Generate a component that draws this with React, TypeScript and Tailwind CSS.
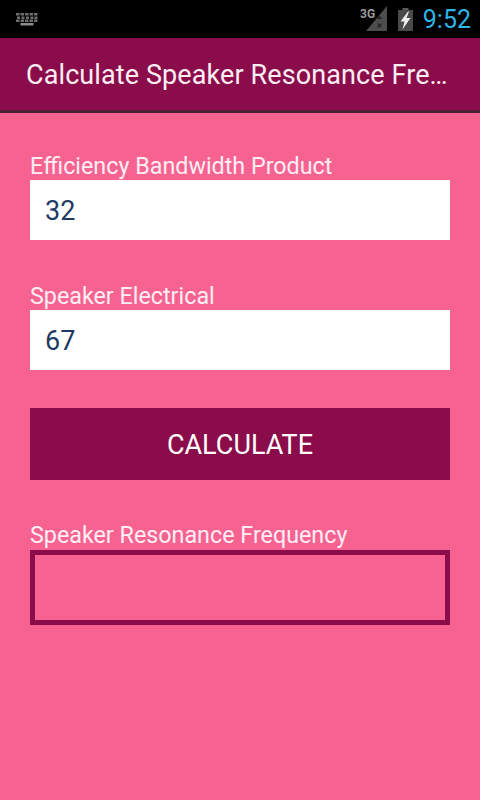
import React from 'react';

const KeyboardIcon = () => (
  <svg width="22" height="13" viewBox="0 0 22 13" fill="#6e6e6e">
    {[0, 4.5, 9, 13.5, 18].map(x => <rect key={x} x={x} y="0" width="3.5" height="2.5" />)}
    {[1, 5.5, 10, 14.5, 18.5].map(x => <rect key={x} x={x} y="3.5" width="3" height="2.5" />)}
    {[0, 4.5, 9, 13.5, 18].map(x => <rect key={x} x={x} y="6.5" width="3.5" height="2.5" />)}
    <rect x="4.5" y="10" width="13" height="2.5" fill="#8a8a8a" />
  </svg>
);

const SignalIcon = () => (
  <svg width="28" height="26" viewBox="0 0 28 26">
    <path d="M27 0V25H6Z" fill="#4d4d4d" />
    <path d="M19 9l3.5 4h-7z" fill="#262626" />
    <path d="M18 17l2 1.2 2.2-.6-1.4 2 .8 2.4-2.2-1.2-2 1.2.6-2.4z" fill="#262626" />
    <text x="0" y="12" fontSize="12" fontWeight="700" fill="#9a9a9a" fontFamily="Roboto, sans-serif">3G</text>
  </svg>
);

const BatteryIcon = () => (
  <svg width="15" height="23" viewBox="0 0 15 23">
    <rect x="4.5" y="0" width="6" height="2" fill="#5a5a5a" />
    <rect x="0" y="2" width="15" height="21" fill="#4a4a4a" />
    <path d="M10 3.5 L2.5 13.5 H6.5 L4.5 21.5 L12.5 10 H8.5 L11 3.5Z" fill="#eee" />
  </svg>
);

const Field = ({ label, value }: { label: string; value: string }) => (
  <div>
    <div className="text-[23.3px] leading-[28px] text-[#ffeef4] h-[28px]">{label}</div>
    <div className="h-[60px] bg-white pl-[15px] pt-[2px] flex items-center text-[27px] text-[#1f3a63]">{value}</div>
  </div>
);

export default function App() {
  return (
    <div className="w-[480px] h-[800px] overflow-hidden flex flex-col bg-[#f76391]" style={{ fontFamily: 'Roboto, sans-serif' }}>
      <div className="h-[38px] shrink-0 bg-black flex items-center justify-between pl-[16px] pr-[9px]">
        <KeyboardIcon />
        <div className="flex items-center">
          <SignalIcon />
          <div className="ml-[10px] mr-[10px]"><BatteryIcon /></div>
          <span className="text-[25px] text-[#2fb4e6] leading-none">9:52</span>
        </div>
      </div>
      <div className="h-[75px] shrink-0 bg-[#8b0c4a] border-b-[3px] border-[#4a2034] flex items-center pl-[26px] pt-[2px]">
        <span className="text-[27px] leading-none tracking-[0.1px] text-[#fdeef4] whitespace-nowrap">Calculate Speaker Resonance Fre…</span>
      </div>
      <div className="flex-1 px-[30px] pt-[39px]">
        <Field label="Efficiency Bandwidth Product" value="32" />
        <div className="h-[42px]" />
        <Field label="Speaker Electrical" value="67" />
        <button className="mt-[38px] w-full h-[72px] pt-[2px] bg-[#8b0c4a] text-white text-[27px]">CALCULATE</button>
        <div className="mt-[40px] text-[23.3px] leading-[30px] h-[30px] text-[#ffeef4]">Speaker Resonance Frequency</div>
        <div className="h-[75px] border-[5px] border-[#8b0c4a]" />
      </div>
    </div>
  );
}
